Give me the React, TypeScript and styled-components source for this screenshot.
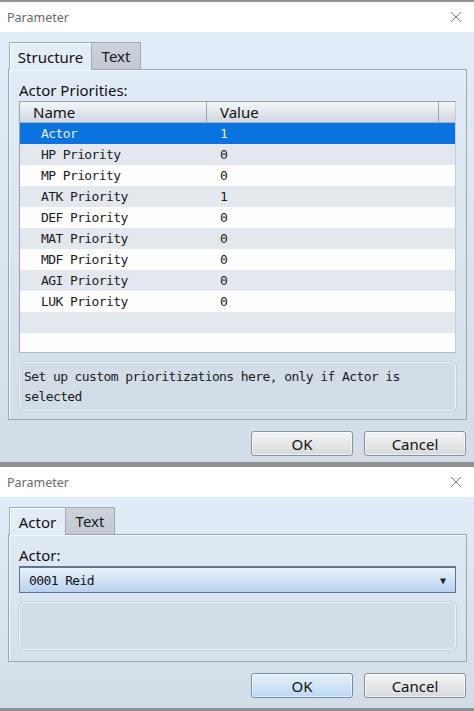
import styled, { createGlobalStyle, css } from 'styled-components'

const GlobalStyle = createGlobalStyle`
  html, body {
    margin: 0;
    padding: 0;
    background: #8e9297;
  }
  * {
    box-sizing: border-box;
  }
`

const UI_FONT = `"Noto Sans", "Open Sans", sans-serif`
const MONO_FONT = `"DejaVu Sans Mono", "Liberation Mono", monospace`

const Page = styled.div`
  display: flex;
  flex-direction: column;
  gap: 5px;
  padding: 2px 0 3px;
  width: 474px;
`

const Window = styled.div<{ $height: number }>`
  display: flex;
  flex-direction: column;
  height: ${(p) => p.$height}px;
  background: linear-gradient(#e3eefa, #d3dde7);
  font-family: ${UI_FONT};
`

const TitleBar = styled.div`
  display: flex;
  align-items: center;
  justify-content: space-between;
  height: 30px;
  padding: 0 12px 0 7px;
  background: #ffffff;
  flex-shrink: 0;
`

const Title = styled.span`
  font-size: 12.5px;
  color: #6a6a6a;
`

const Body = styled.div`
  display: flex;
  flex-direction: column;
  flex: 1;
  padding: 10px 7px 0 8px;
`

const Tabs = styled.div`
  display: flex;
  padding-left: 1px;
  height: 27px;
  flex-shrink: 0;
`

const Tab = styled.div<{ $active?: boolean; $width: number }>`
  display: flex;
  align-items: center;
  justify-content: center;
  width: ${(p) => p.$width}px;
  font-size: 15px;
  color: #111;
  border: 1px solid #a3a9b0;
  border-bottom: none;
  ${(p) =>
    p.$active
      ? css`
          background: #e3edf8;
          box-shadow: inset 1px 1px 0 #ffffff;
          position: relative;
          z-index: 1;
          margin-bottom: -1px;
          height: 28px;
        `
      : css`
          background: linear-gradient(#cdd3db, #c2c9d2);
          border-left: none;
          color: #1a1a1a;
        `}
`

const Panel = styled.div<{ $height: number }>`
  display: flex;
  flex-direction: column;
  height: ${(p) => p.$height}px;
  padding: 11px 10px 0 10px;
  border: 1px solid #9ea4ab;
  box-shadow: inset 1px 1px 0 #f3f7fb;
`

const FieldLabel = styled.div`
  font-size: 15px;
  line-height: 18px;
  color: #111;
  margin-bottom: 2px;
`

const Grid = styled.div`
  display: flex;
  flex-direction: column;
  height: 252px;
  overflow: hidden;
  border-left: 1px solid #9aa2ab;
  border-top: 1px solid #9aa2ab;
  border-right: 1px solid #c4ccd5;
  border-bottom: 1px solid #b4bcc5;
  background: #fdfdfe;
`

const HeaderRow = styled.div`
  display: flex;
  height: 21px;
  flex-shrink: 0;
  background: linear-gradient(#f4f6f8, #d0d7df);
  border-bottom: 1px solid #a8b0b9;
`

const HeaderCell = styled.div<{ $width?: number; $grow?: boolean }>`
  ${(p) => (p.$width ? `width: ${p.$width}px;` : '')}
  ${(p) => (p.$grow ? 'flex: 1;' : '')}
  padding-left: 13px;
  font-size: 15px;
  line-height: 20px;
  color: #111;
  border-right: 1px solid #9ba3ac;
  &:last-child {
    border-right: none;
    padding-left: 0;
  }
`

const Row = styled.div<{ $tone: 'selected' | 'light' | 'white' }>`
  display: flex;
  height: 21px;
  flex-shrink: 0;
  align-items: center;
  font-family: ${MONO_FONT};
  font-size: 13px;
  letter-spacing: -0.6px;
  background: ${(p) =>
    p.$tone === 'selected' ? '#0a73e0' : p.$tone === 'light' ? '#e3e8ee' : '#fdfdfe'};
  color: ${(p) => (p.$tone === 'selected' ? '#e6f0ff' : '#1b1b1b')};
`

const NameCell = styled.span`
  width: 187px;
  padding-left: 21px;
`

const ValueCell = styled.span`
  padding-left: 13px;
`

const NoteBox = styled.div<{ $height: number }>`
  margin-top: 9px;
  height: ${(p) => p.$height}px;
  padding: 4px 4px;
  border: 1px solid #eef3f8;
  border-radius: 5px;
  background: #d3dde7;
  box-shadow: 0 0 0 1px #c5cfda;
  font-family: ${MONO_FONT};
  font-size: 13px;
  letter-spacing: -0.6px;
  line-height: 20px;
  color: #1b1b1b;
`

const Combo = styled.div`
  display: flex;
  align-items: center;
  justify-content: space-between;
  height: 27px;
  padding: 0 9px 0 9px;
  border: 1px solid #5d7593;
  border-top-width: 2px;
  background: linear-gradient(#eaf2fc, #b8d1ef);
  font-family: ${MONO_FONT};
  font-size: 13px;
  letter-spacing: -0.6px;
  color: #111;
`

const ComboArrow = styled.span`
  font-size: 10px;
  color: #1e1e1e;
  letter-spacing: 0;
`

const Footer = styled.div`
  display: flex;
  justify-content: flex-end;
  gap: 11px;
  padding: 11px 1px 0 0;
`

const Button = styled.button<{ $primary?: boolean }>`
  width: 102px;
  height: 25px;
  padding: 0;
  font-family: ${UI_FONT};
  font-size: 15px;
  color: #111;
  border-radius: 3px;
  border: 1px solid ${(p) => (p.$primary ? '#6f8fb3' : '#8d9196')};
  background: ${(p) =>
    p.$primary
      ? 'linear-gradient(#e6f1fb, #bcd8f2)'
      : 'linear-gradient(#f5f5f6, #d7d9dc)'};
  box-shadow: inset 0 0 0 1px rgba(255, 255, 255, 0.6);
`

function CloseIcon() {
  return (
    <svg width="12" height="12" viewBox="0 0 12 12">
      <path d="M1 1 L11 11 M11 1 L1 11" stroke="#7a7a7a" strokeWidth="1" fill="none" />
    </svg>
  )
}

const priorities = [
  { name: 'Actor', value: '1' },
  { name: 'HP Priority', value: '0' },
  { name: 'MP Priority', value: '0' },
  { name: 'ATK Priority', value: '1' },
  { name: 'DEF Priority', value: '0' },
  { name: 'MAT Priority', value: '0' },
  { name: 'MDF Priority', value: '0' },
  { name: 'AGI Priority', value: '0' },
  { name: 'LUK Priority', value: '0' },
  { name: '', value: '' },
  { name: '', value: '' },
]

function StructureDialog() {
  return (
    <Window $height={460}>
      <TitleBar>
        <Title>Parameter</Title>
        <CloseIcon />
      </TitleBar>
      <Body>
        <Tabs>
          <Tab $active $width={83}>Structure</Tab>
          <Tab $width={49}>Text</Tab>
        </Tabs>
        <Panel $height={351}>
          <FieldLabel>Actor Priorities:</FieldLabel>
          <Grid>
            <HeaderRow>
              <HeaderCell $width={187}>Name</HeaderCell>
              <HeaderCell $grow>Value</HeaderCell>
              <HeaderCell $width={16} />
            </HeaderRow>
            {priorities.map((p, i) => (
              <Row key={i} $tone={i === 0 ? 'selected' : i % 2 === 1 ? 'light' : 'white'}>
                <NameCell>{p.name}</NameCell>
                <ValueCell>{p.value}</ValueCell>
              </Row>
            ))}
          </Grid>
          <NoteBox $height={49}>
            Set up custom prioritizations here, only if Actor is selected
          </NoteBox>
        </Panel>
        <Footer>
          <Button>OK</Button>
          <Button>Cancel</Button>
        </Footer>
      </Body>
    </Window>
  )
}

function ActorDialog() {
  return (
    <Window $height={241}>
      <TitleBar>
        <Title>Parameter</Title>
        <CloseIcon />
      </TitleBar>
      <Body>
        <Tabs>
          <Tab $active $width={57}>Actor</Tab>
          <Tab $width={49}>Text</Tab>
        </Tabs>
        <Panel $height={128}>
          <FieldLabel>Actor:</FieldLabel>
          <Combo>
            <span>0001 Reid</span>
            <ComboArrow>▼</ComboArrow>
          </Combo>
          <NoteBox $height={48} />
        </Panel>
        <Footer>
          <Button $primary>OK</Button>
          <Button>Cancel</Button>
        </Footer>
      </Body>
    </Window>
  )
}

export default function App() {
  return (
    <>
      <GlobalStyle />
      <Page>
        <StructureDialog />
        <ActorDialog />
      </Page>
    </>
  )
}
